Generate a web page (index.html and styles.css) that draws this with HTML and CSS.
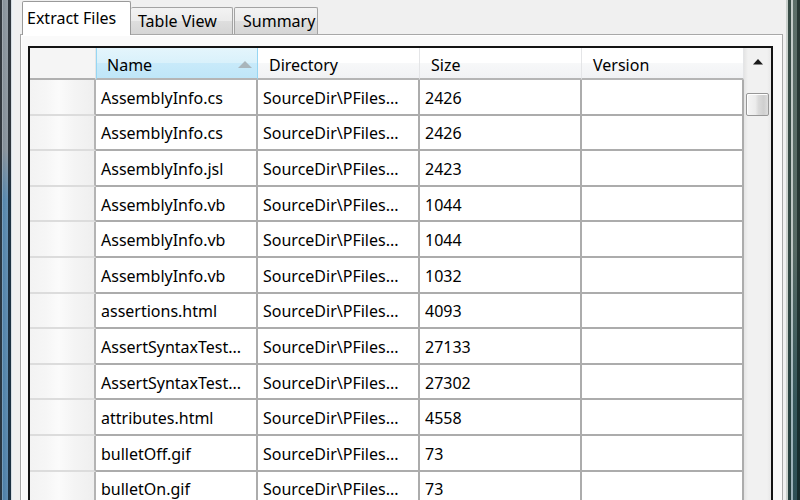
FILE: index.html
```html
<!DOCTYPE html>
<html>
<head>
<meta charset="utf-8">
<link rel="stylesheet" href="styles.css">
</head>
<body>
<div class="screen">
  <div class="frame-left"></div>
  <div class="window">
    <div class="tabs">
      <div class="tab tab-active tab-extract">Extract Files</div>
      <div class="tab tab-table">Table View</div>
      <div class="tab tab-summary">Summary</div>
    </div>
    <div class="panel">
      <div class="grid">
        <div class="grid-body">
          <div class="row head-row">
            <div class="cell corner"></div>
            <div class="cell hcell hsorted">Name
              <svg class="sort-arrow" width="14" height="8" viewBox="0 0 14 8"><polygon points="7,0 14,7 0,7" fill="#a9b5bb"/></svg>
            </div>
            <div class="cell hcell">Directory</div>
            <div class="cell hcell">Size</div>
            <div class="cell hcell">Version</div>
          </div>
          <div class="row"><div class="cell rh"></div><div class="cell">AssemblyInfo.cs</div><div class="cell">SourceDir\PFiles...</div><div class="cell">2426</div><div class="cell"></div></div>
          <div class="row"><div class="cell rh"></div><div class="cell">AssemblyInfo.cs</div><div class="cell">SourceDir\PFiles...</div><div class="cell">2426</div><div class="cell"></div></div>
          <div class="row"><div class="cell rh"></div><div class="cell">AssemblyInfo.jsl</div><div class="cell">SourceDir\PFiles...</div><div class="cell">2423</div><div class="cell"></div></div>
          <div class="row"><div class="cell rh"></div><div class="cell">AssemblyInfo.vb</div><div class="cell">SourceDir\PFiles...</div><div class="cell">1044</div><div class="cell"></div></div>
          <div class="row"><div class="cell rh"></div><div class="cell">AssemblyInfo.vb</div><div class="cell">SourceDir\PFiles...</div><div class="cell">1044</div><div class="cell"></div></div>
          <div class="row"><div class="cell rh"></div><div class="cell">AssemblyInfo.vb</div><div class="cell">SourceDir\PFiles...</div><div class="cell">1032</div><div class="cell"></div></div>
          <div class="row"><div class="cell rh"></div><div class="cell">assertions.html</div><div class="cell">SourceDir\PFiles...</div><div class="cell">4093</div><div class="cell"></div></div>
          <div class="row"><div class="cell rh"></div><div class="cell">AssertSyntaxTest...</div><div class="cell">SourceDir\PFiles...</div><div class="cell">27133</div><div class="cell"></div></div>
          <div class="row"><div class="cell rh"></div><div class="cell">AssertSyntaxTest...</div><div class="cell">SourceDir\PFiles...</div><div class="cell">27302</div><div class="cell"></div></div>
          <div class="row"><div class="cell rh"></div><div class="cell">attributes.html</div><div class="cell">SourceDir\PFiles...</div><div class="cell">4558</div><div class="cell"></div></div>
          <div class="row"><div class="cell rh"></div><div class="cell">bulletOff.gif</div><div class="cell">SourceDir\PFiles...</div><div class="cell">73</div><div class="cell"></div></div>
          <div class="row"><div class="cell rh"></div><div class="cell">bulletOn.gif</div><div class="cell">SourceDir\PFiles...</div><div class="cell">73</div><div class="cell"></div></div>
        </div>
        <div class="scrollbar">
          <div class="sb-up">
            <svg width="10" height="6" viewBox="0 0 10 6"><polygon points="5,0 10,5.5 0,5.5" fill="#1a1a1a"/></svg>
          </div>
          <div class="sb-thumb"></div>
        </div>
      </div>
    </div>
  </div>
  <div class="frame-right"></div>
</div>
</body>
</html>
```

FILE: styles.css
```css
html, body {
  margin: 0;
  padding: 0;
}
body {
  font-family: "Noto Sans", "Open Sans", sans-serif;
  font-size: 16px;
  color: #000;
  background: #f0f0f0;
}
.screen {
  display: flex;
  width: 800px;
  height: 500px;
  overflow: hidden;
}
.frame-left {
  width: 14px;
  flex: none;
  background:
    linear-gradient(to right,
      rgba(40,45,50,0.85) 0, rgba(40,45,50,0.85) 2px,
      rgba(255,255,255,0.35) 2px, rgba(255,255,255,0.35) 3px,
      rgba(255,255,255,0.15) 3px, rgba(255,255,255,0.25) 8px,
      rgba(20,25,30,0.7) 8px, rgba(20,25,30,0.7) 11px,
      #d6dde2 11px, #d6dde2 12px,
      #eef1f3 12px, #eef1f3 14px),
    linear-gradient(to bottom, #727e88 0, #6d7a85 30%, #356f9c 40%, #2b6797 100%);
}
.frame-right {
  width: 14px;
  flex: none;
  background:
    linear-gradient(to right,
      #c9d0cc 0, #c9d0cc 2px,
      rgba(40,60,55,0.8) 2px, rgba(40,60,55,0.8) 5px,
      rgba(255,255,255,0.55) 5px, rgba(255,255,255,0.55) 7px,
      rgba(60,80,75,0.5) 7px, rgba(60,80,75,0.5) 11px,
      rgba(20,35,32,0.8) 11px, rgba(20,35,32,0.8) 14px),
    linear-gradient(to bottom, #7d8d87 0, #6f827c 50%, #2f5f6c 80%, #1f4f60 100%);
}
.window {
  flex: 1;
  background: #f0f0f0;
  display: flex;
  flex-direction: column;
  min-width: 0;
}
.tabs {
  height: 34px;
  display: flex;
  align-items: flex-end;
  padding-left: 8px;
  flex: none;
}
.tab {
  box-sizing: border-box;
  height: 27px;
  border: 1px solid #a3a3a3;
  border-bottom: none;
  border-radius: 2px 2px 0 0;
  background: linear-gradient(to bottom, #f3f3f3 0, #ebebeb 50%, #dedede 51%, #d5d5d5 100%);
  display: flex;
  align-items: center;
  white-space: nowrap;
}
.tab-active {
  height: 34px;
  margin-bottom: -1px;
  background: #ffffff;
  position: relative;
  z-index: 1;
  border-color: #9a9a9a;
  padding-bottom: 1px;
}
.tab-extract {
  width: 109px;
  padding-left: 4px;
}
.tab-table {
  width: 102px;
  padding-left: 7px;
  border-left: none;
}
.tab-summary {
  width: 84px;
  padding-left: 8px;
  margin-left: 1px;
}
.panel {
  flex: 1;
  margin: 0 3px 0 6px;
  border: 1px solid #a8a8a8;
  border-bottom: none;
  background: #fafafa;
  box-shadow: inset 1px 1px 0 #ffffff;
  padding: 11px 9px 0 7px;
  min-height: 0;
}
.grid {
  display: flex;
  width: 745px;
  height: 500px;
  box-sizing: border-box;
  border: 2px solid #141414;
  border-bottom: none;
  background: #ffffff;
}
.grid-body {
  width: 714px;
  flex: none;
}
.row {
  display: grid;
  grid-template-columns: 66px 162px 162px 162px 162px;
  height: 35.6px;
}
.cell {
  box-sizing: border-box;
  border-right: 2px solid #acacac;
  border-bottom: 2px solid #acacac;
  padding-left: 5px;
  padding-top: 2px;
  display: flex;
  align-items: center;
  white-space: nowrap;
  overflow: hidden;
}
.rh {
  background: linear-gradient(to right, #f3f3f3 0, #f6f6f6 25%, #fbfbfb 45%, #f4f4f4 70%, #efefef 100%);
  border-bottom-color: #dcdcdc;
  border-right-color: #b4b4b4;
}
.head-row {
  height: 32px;
}
.corner {
  background: #f5f5f5;
  border-right: 1px solid #e6e6e6;
  border-bottom-color: #b0b0b0;
}
.hcell {
  padding-left: 11px;
  padding-top: 4px;
  background: linear-gradient(to bottom, #ffffff 0, #ffffff 50%, #f7f8f9 51%, #f1f2f4 100%);
  border-right: 1px solid #e4e5e7;
  border-bottom: 2px solid #b5b5b5;
}
.hsorted {
  background: linear-gradient(to bottom, #e4f5fc 0, #d9f1fb 50%, #c8eafa 51%, #bfe6f8 100%);
  border-left: 1px solid #96d6f3;
  border-right: 1px solid #96d6f3;
  padding-left: 10px;
  justify-content: space-between;
  padding-right: 5px;
}
.sort-arrow {
  flex: none;
  margin-top: -1px;
}
.scrollbar {
  flex: 1;
  background: linear-gradient(to right, #e4e4e4 0, #f1f1f1 15%, #f1f1f1 85%, #e8e8e8 100%);
  display: flex;
  flex-direction: column;
  align-items: center;
}
.sb-up {
  height: 27px;
  width: 100%;
  display: flex;
  align-items: center;
  justify-content: center;
}
.sb-thumb {
  margin-top: 18px;
  width: 23px;
  height: 23px;
  box-sizing: border-box;
  border: 1px solid #979797;
  border-radius: 2px;
  background: linear-gradient(to right, #f5f5f5 0, #ececec 40%, #dadada 55%, #cfcfcf 80%, #dedede 100%);
  box-shadow: inset 1px 1px 0 #ffffff;
}
```
